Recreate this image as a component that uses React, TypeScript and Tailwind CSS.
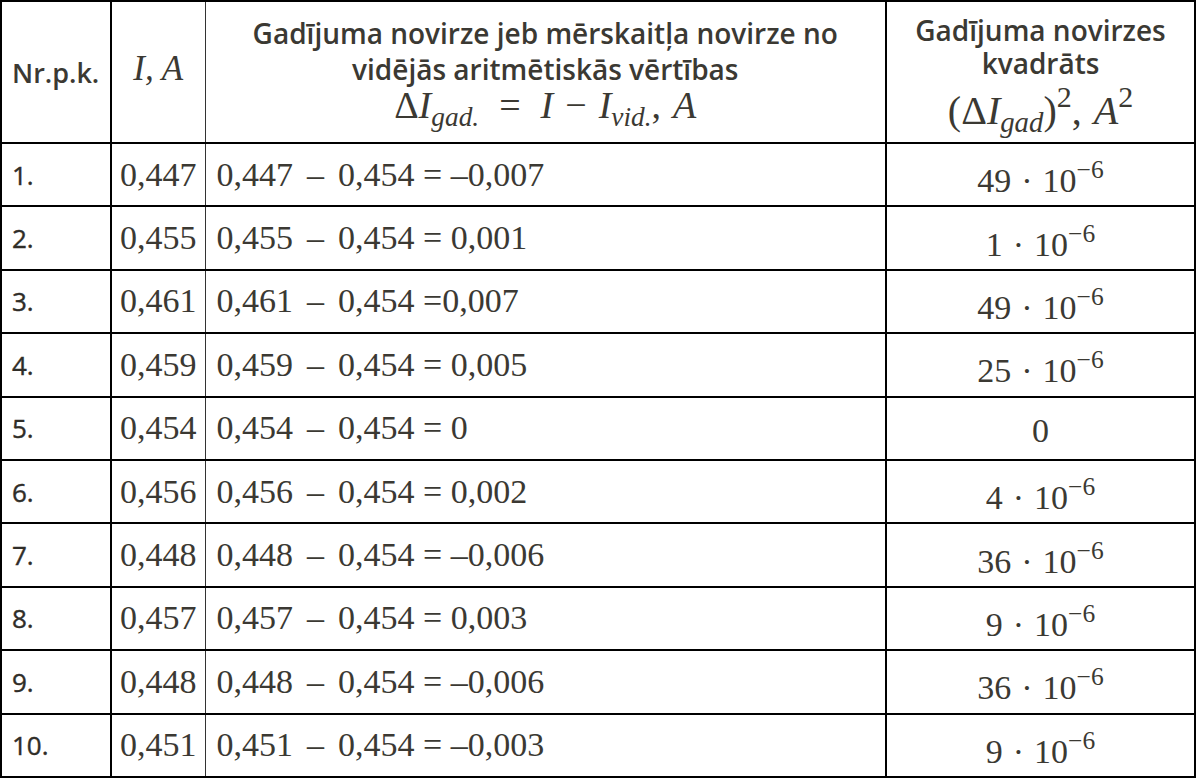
const rows = [
  { n: '1.', i: '0,447', r: '= –0,007', k: '49' },
  { n: '2.', i: '0,455', r: '= 0,001', k: '1' },
  { n: '3.', i: '0,461', r: '=0,007', k: '49' },
  { n: '4.', i: '0,459', r: '= 0,005', k: '25' },
  { n: '5.', i: '0,454', r: '= 0', k: '' },
  { n: '6.', i: '0,456', r: '= 0,002', k: '4' },
  { n: '7.', i: '0,448', r: '= –0,006', k: '36' },
  { n: '8.', i: '0,457', r: '= 0,003', k: '9' },
  { n: '9.', i: '0,448', r: '= –0,006', k: '36' },
  { n: '10.', i: '0,451', r: '= –0,003', k: '9' },
]

const sans = "font-['Open_Sans','Noto_Sans',sans-serif]"
const serif = "font-['Liberation_Serif',serif]"

function Sub({ children }: { children: React.ReactNode }) {
  return <span className="text-[0.72em] leading-none italic align-[-0.3em]">{children}</span>
}

function Sup({ children }: { children: React.ReactNode }) {
  return <span className="text-[0.75em] leading-none align-[0.55em]">{children}</span>
}

export default function App() {
  return (
    <div className="bg-white w-[1198px] h-[779px]">
      <table className="w-[1196px] table-fixed border-collapse border-2 border-black text-[#3b3933]">
        <colgroup>
          <col className="w-[110px]" />
          <col className="w-[94px]" />
          <col className="w-[681px]" />
          <col className="w-[309px]" />
        </colgroup>
        <thead>
          <tr className="h-[142px] border-b-2 border-black">
            <th className={`${sans} font-semibold text-[27px] leading-none text-left pl-[10px] border-r-2 border-black`}>
              Nr.p.k.
            </th>
            <th className={`${serif} text-[35px] leading-none font-normal italic border-r border-[#333] pb-2`}>
              I,<span className="ml-[8px]">A</span>
            </th>
            <th className="border-r-2 border-black align-top pt-[13px] pb-0">
              <div className={`${sans} font-semibold text-[28px] leading-[36px]`}>
                Gadījuma novirze jeb mērskaitļa novirze no
                <br />
                vidējās aritmētiskās vērtības
              </div>
              <div className={`${serif} text-[38px] font-normal leading-[36px]`}>
                Δ<span className="italic">I</span>
                <Sub>gad.</Sub>
                <span className="mx-[20px]">=</span>
                <span className="italic">I</span>
                <span className="mx-[12px]">−</span>
                <span className="italic">I</span>
                <Sub>vid.</Sub>,<span className="italic ml-[12px]">A</span>
              </div>
            </th>
            <th className="align-top pt-[12px] pb-0">
              <div className={`${sans} font-semibold text-[28px] leading-[33px]`}>
                Gadījuma novirzes
                <br />
                kvadrāts
              </div>
              <div className={`${serif} text-[40px] font-normal leading-[38px] mt-[2px]`}>
                (Δ<span className="italic">I</span>
                <Sub>gad</Sub>)<Sup>2</Sup>,<span className="italic ml-[12px]">A</span>
                <Sup>2</Sup>
              </div>
            </th>
          </tr>
        </thead>
        <tbody>
          {rows.map((row) => (
            <tr key={row.n} className="h-[63.4px] border-b-2 border-black">
              <td className={`${sans} text-[26px] leading-none pl-[10px] border-r-2 border-black text-[#2f2d28] [-webkit-text-stroke:0.4px_#2f2d28]`}>
                {row.n}
              </td>
              <td className={`${serif} text-[34px] leading-none text-center border-r border-[#333]`}>{row.i}</td>
              <td className={`${serif} text-[34px] leading-none pl-[11px] border-r-2 border-black whitespace-nowrap`}>
                {row.i}
                <span className="mx-[14px]">–</span>
                0,454 {row.r}
              </td>
              <td className={`${serif} text-[34px] leading-none text-center pt-[6px]`}>
                {row.k === '' ? (
                  '0'
                ) : (
                  <>
                    {row.k}
                    <span className="mx-[10px]">·</span>
                    10<Sup>−6</Sup>
                  </>
                )}
              </td>
            </tr>
          ))}
        </tbody>
      </table>
    </div>
  )
}
